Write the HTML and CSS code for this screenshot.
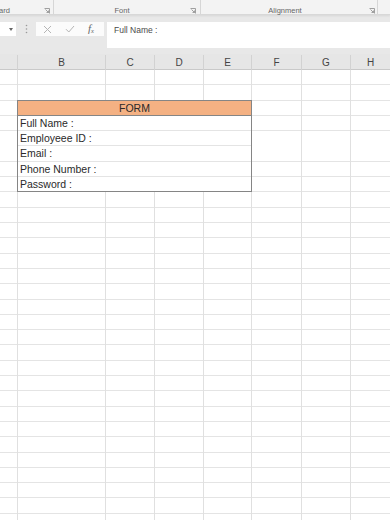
FILE: index.html
```html
<!DOCTYPE html>
<html>
<head>
<meta charset="utf-8">
<link rel="stylesheet" href="styles.css">
</head>
<body>
<div class="app">
  <div class="ribbon">
    <div class="group g-clip">
      <span class="glabel left">ard</span>
      <svg class="launch" width="6" height="6" viewBox="0 0 6 6"><path d="M0.5 0.5H5.5V5.5" fill="none" stroke="#8a8a8a" stroke-width="0.8"/><path d="M1.5 1.5L4.5 4.5M4.5 2.5V4.5H2.5" fill="none" stroke="#8a8a8a" stroke-width="0.8"/></svg>
    </div>
    <div class="group g-font">
      <span class="glabel">Font</span>
      <svg class="launch" width="6" height="6" viewBox="0 0 6 6"><path d="M0.5 0.5H5.5V5.5" fill="none" stroke="#8a8a8a" stroke-width="0.8"/><path d="M1.5 1.5L4.5 4.5M4.5 2.5V4.5H2.5" fill="none" stroke="#8a8a8a" stroke-width="0.8"/></svg>
    </div>
    <div class="group g-align">
      <span class="glabel">Alignment</span>
      <svg class="launch" width="6" height="6" viewBox="0 0 6 6"><path d="M0.5 0.5H5.5V5.5" fill="none" stroke="#8a8a8a" stroke-width="0.8"/><path d="M1.5 1.5L4.5 4.5M4.5 2.5V4.5H2.5" fill="none" stroke="#8a8a8a" stroke-width="0.8"/></svg>
    </div>
    <div class="group g-rest"></div>
  </div>

  <div class="fbar">
    <div class="namebox">
      <svg width="4" height="3" viewBox="0 0 4 3"><path d="M0 0H4L2 3Z" fill="#666"/></svg>
    </div>
    <svg class="grip" width="3" height="10" viewBox="0 0 3 10"><circle cx="1.5" cy="1.5" r="0.8" fill="#9a9a9a"/><circle cx="1.5" cy="5" r="0.8" fill="#9a9a9a"/><circle cx="1.5" cy="8.5" r="0.8" fill="#9a9a9a"/></svg>
    <div class="fbtns">
      <svg class="ico" width="9" height="9" viewBox="0 0 9 9"><path d="M1 1L8 8M8 1L1 8" stroke="#b5b5b5" stroke-width="1" fill="none"/></svg>
      <svg class="ico" width="10" height="8" viewBox="0 0 10 8"><path d="M1 4.2L3.8 7L9 1" stroke="#b5b5b5" stroke-width="1" fill="none"/></svg>
      <span class="fx">f<sub>x</sub></span>
    </div>
    <div class="finput">Full Name :</div>
  </div>

  <div class="colheads">
    <div class="corner"></div>
    <div class="ch">B</div>
    <div class="ch">C</div>
    <div class="ch">D</div>
    <div class="ch">E</div>
    <div class="ch">F</div>
    <div class="ch">G</div>
    <div class="ch">H</div>
  </div>

  <div class="sheet">
    <div class="form">
      <div class="fhead">FORM</div>
      <div class="frow">Full Name :</div>
      <div class="frow">Employeee ID :</div>
      <div class="frow">Email :</div>
      <div class="frow">Phone Number :</div>
      <div class="frow last">Password :</div>
    </div>
  </div>
</div>
</body>
</html>
```

FILE: styles.css
```css
html, body {
  margin: 0;
  padding: 0;
}
body {
  width: 390px;
  height: 520px;
  overflow: hidden;
  background: #e8e8e8;
  font-family: "Liberation Sans", Arial, sans-serif;
}
.app {
  display: flex;
  flex-direction: column;
  height: 520px;
}

/* Ribbon group labels */
.ribbon {
  display: flex;
  height: 15px;
  background: #f3f3f3;
  border-bottom: 1px solid #d8d8d8;
  box-shadow: 0 1px 2px rgba(0,0,0,0.08);
  box-sizing: border-box;
}
.group {
  display: flex;
  align-items: center;
  box-sizing: border-box;
  border-right: 1px solid #d6d6d6;
  height: 14px;
}
.g-clip { width: 54px; padding-right: 3px; }
.g-font { width: 147px; padding-right: 4px; }
.g-align { width: 177px; padding-right: 2px; }
.g-rest { flex: 1; border-right: none; }
.glabel {
  flex: 1;
  text-align: center;
  font-size: 7.5px;
  color: #666;
  padding-top: 6px;
}
.glabel.left {
  text-align: left;
  margin-left: -1px;
}
.launch {
  margin-top: 7px;
}

/* Formula bar */
.fbar {
  display: flex;
  align-items: flex-start;
  height: 39px;
  padding-top: 7px;
  box-sizing: border-box;
}
.namebox {
  width: 16px;
  height: 14px;
  background: #ffffff;
  display: flex;
  align-items: center;
  justify-content: flex-end;
  padding-right: 3px;
  box-sizing: border-box;
}
.grip {
  margin: 2px 0 0 9px;
}
.fbtns {
  margin-left: 8px;
  width: 68px;
  height: 14px;
  background: #fbfbfb;
  display: flex;
  align-items: center;
  box-sizing: border-box;
  padding-left: 7px;
}
.fbtns .ico:nth-child(2) {
  margin-left: 13px;
}
.fx {
  margin-left: 13px;
  font-family: "Liberation Serif", "Times New Roman", serif;
  font-style: italic;
  font-size: 11px;
  color: #666;
  line-height: 10px;
}
.fx sub {
  font-size: 6.5px;
  vertical-align: -1px;
}
.finput {
  margin-left: 3px;
  flex: 1;
  height: 26px;
  background: #ffffff;
  font-size: 8.5px;
  color: #4a4a4a;
  padding: 3px 0 0 7px;
  box-sizing: border-box;
}

/* Column headers */
.colheads {
  display: grid;
  grid-template-columns: 17px 88px 49px 49px 48px 50px 49px 1fr;
  height: 16px;
  border-bottom: 1px solid #c9c9c9;
  box-sizing: border-box;
  background: #e6e6e6;
}
.ch {
  border-left: 1px solid #d2d2d2;
  margin-top: 1px;
  font-size: 10px;
  color: #444;
  text-align: center;
  line-height: 15px;
}

/* Sheet grid */
.sheet {
  flex: 1;
  background-color: #ffffff;
  background-image:
    linear-gradient(to right,
      transparent 17px, #e0e0e0 17px, #e0e0e0 18px, transparent 18px,
      transparent 105px, #e0e0e0 105px, #e0e0e0 106px, transparent 106px,
      transparent 154px, #e0e0e0 154px, #e0e0e0 155px, transparent 155px,
      transparent 203px, #e0e0e0 203px, #e0e0e0 204px, transparent 204px,
      transparent 251px, #e0e0e0 251px, #e0e0e0 252px, transparent 252px,
      transparent 301px, #e0e0e0 301px, #e0e0e0 302px, transparent 302px,
      transparent 350px, #e0e0e0 350px, #e0e0e0 351px, transparent 351px),
    repeating-linear-gradient(to bottom,
      transparent 0, transparent 14.3px, #e4e4e4 14.3px, #e4e4e4 15.3px);
  padding-top: 29.6px;
  padding-left: 17px;
  box-sizing: border-box;
}

/* Form */
.form {
  width: 235px;
  border: 1px solid #858585;
  box-sizing: border-box;
  background: #ffffff;
  font-size: 10.5px;
  color: #2a2a2a;
}
.fhead {
  height: 15.3px;
  background: #f4b183;
  border-bottom: 1px solid #858585;
  box-sizing: border-box;
  text-align: center;
  line-height: 15px;
}
.frow {
  height: 15.3px;
  border-bottom: 1px solid #e4e4e4;
  box-sizing: border-box;
  line-height: 15px;
  padding-left: 2px;
}
.frow.last {
  height: 14.3px;
  border-bottom: none;
}
```
